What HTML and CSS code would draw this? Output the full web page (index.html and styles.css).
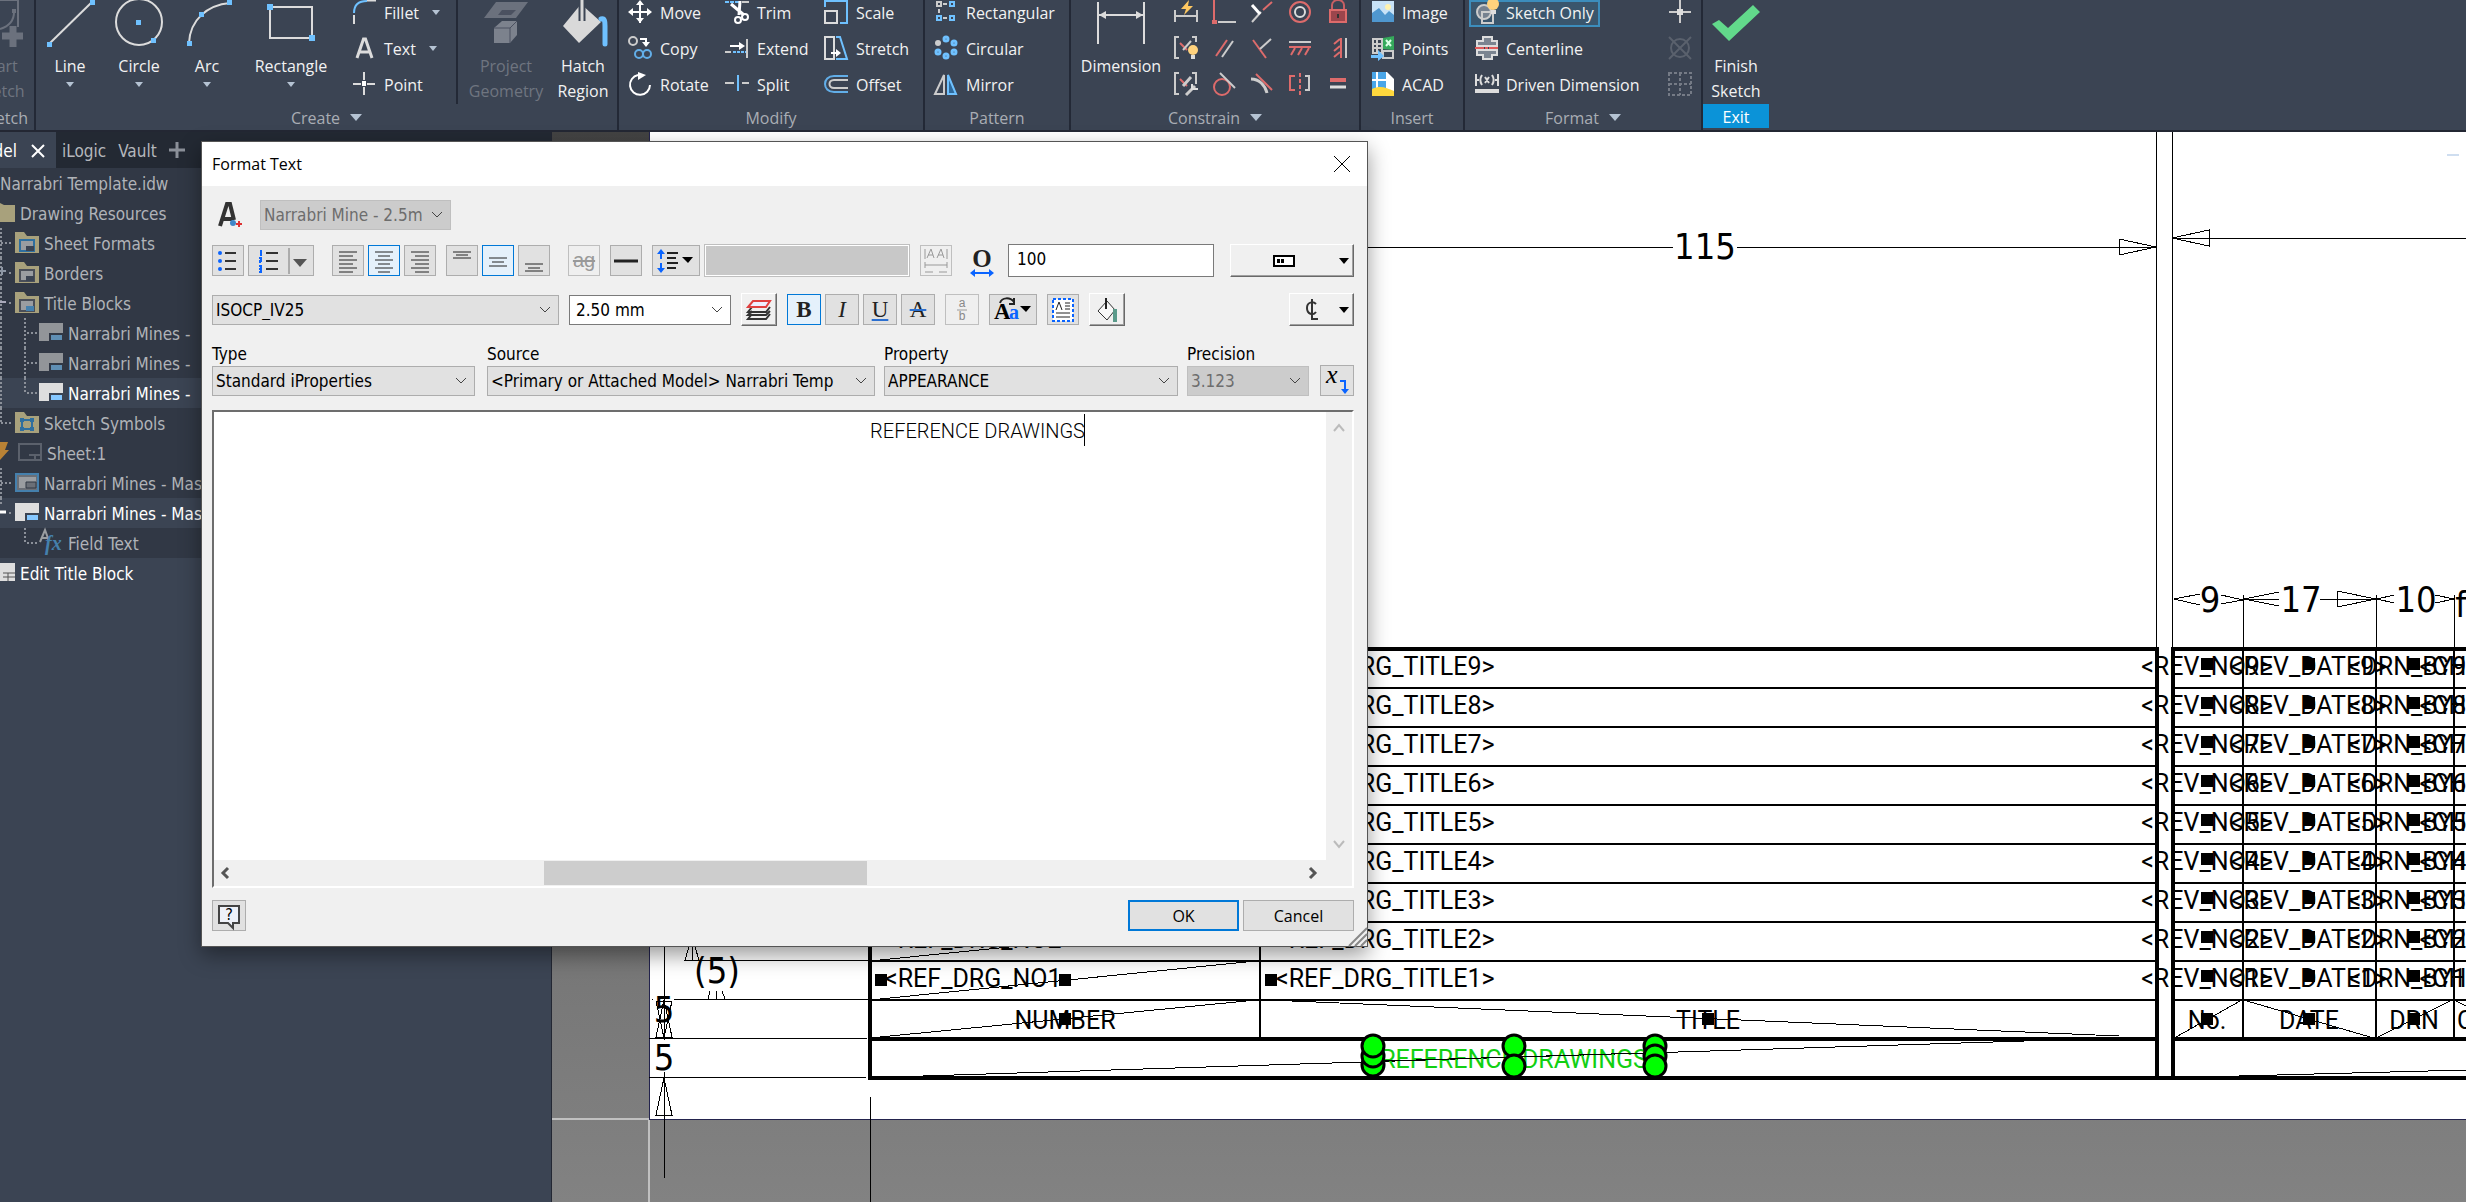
FILE: index.html
```
<!DOCTYPE html>
<html lang="en">
<head>
	<meta charset="UTF-8">
	<title>Narrabri Template.idw</title>
	<link rel="stylesheet" href="styles.css">
</head>
<body>
	<header class="ribbon">
		<section class="panel panel-start">
			<div class="panel-body">
				<button class="big disabled" disabled>
					<svg class="big-icon" width="56" height="54"><g fill="none" stroke="#6b717d" stroke-width="2"><path d="M18 0H46V27M28 29C38 26 42 20 42 12"/></g><path d="M30 36h21M41 26v21" stroke="#6b717d" stroke-width="7"/><path d="M40 9h4v4h-4z" fill="#6b717d"/></svg>
					<span>Start<br>Sketch</span>
				</button>
			</div>
			<h2>Sketch</h2>
		</section>

		<section class="panel panel-create">
			<div class="panel-body">
				<button class="big w-line">
					<svg class="big-icon" width="56" height="54"><path d="M7 44L50 2" stroke="#dcdcdc" stroke-width="2"/><path d="M5 42h5v5h-5zM48 0h5v5h-5z" fill="#6fc1ff"/></svg>
					<span>Line</span><i class="arrow"></i>
				</button>
				<button class="big w-circle">
					<svg class="big-icon" width="56" height="54"><circle cx="28" cy="22" r="23" fill="none" stroke="#dcdcdc" stroke-width="2"/><path d="M25 20h5v5h-5zM40 38h5v5h-5z" fill="#6fc1ff"/></svg>
					<span>Circle</span><i class="arrow"></i>
				</button>
				<button class="big w-arc">
					<svg class="big-icon" width="56" height="54"><path d="M10 43C11 20 28 5 51 3" fill="none" stroke="#dcdcdc" stroke-width="2"/><path d="M8 41h5v5h-5zM20 12h5v5h-5zM48 0h5v5h-5z" fill="#6fc1ff"/></svg>
					<span>Arc</span><i class="arrow"></i>
				</button>
				<button class="big w-rect">
					<svg class="big-icon" width="56" height="54"><path d="M7 7H49V38H7z" fill="none" stroke="#dcdcdc" stroke-width="2"/><path d="M4 4h6v6h-6zM46 35h6v6h-6z" fill="#6fc1ff"/></svg>
					<span>Rectangle</span><i class="arrow"></i>
				</button>
				<div class="tools tools-create">
					<button><svg width="24" height="24"><path d="M2 24V15" stroke="#dcdcdc" stroke-width="2"/><path d="M2 13C2 5 7 1 15 1" fill="none" stroke="#6fc1ff" stroke-width="2"/><path d="M15 0h9" stroke="#dcdcdc" stroke-width="3"/></svg><span>Fillet</span><i class="arrow"></i></button>
					<button><svg width="24" height="24"><path d="M5 22L11.500 3h2L20 22M8 16h9" fill="none" stroke="#dcdcdc" stroke-width="3"/></svg><span>Text</span><i class="arrow"></i></button>
					<button><svg width="24" height="24"><path d="M1 12h8M15 12h8M12 0v8M12 15v8" stroke="#dcdcdc" stroke-width="2"/><path d="M10 9h4v5h-4z" fill="#fff"/></svg><span>Point</span></button>
				</div>
				<button class="big disabled w-project" disabled>
					<svg class="big-icon" width="56" height="54"><path d="M18 2H50L38 18H6z" fill="#6b717d"/><path d="M24 10h14l-5 5H20z" fill="#4b5160"/><path d="M16 28l8-7h15v14l-7 8H16z" fill="#7c828d"/><path d="M16 28h16v15M32 28l7-7" fill="none" stroke="#4b5160"/></svg>
					<span>Project<br>Geometry</span>
				</button>
				<button class="big w-hatch">
					<svg class="big-icon" width="56" height="54"><path d="M26 4L46 22L24 43L8 26z" fill="#d9d9d9"/><path d="M46 19C50 18 50 22 50 26V44" fill="none" stroke="#6fc1ff" stroke-width="5" stroke-linecap="round"/><path d="M27 0v21" stroke="#3b4453" stroke-width="7"/><path d="M27 0v21" stroke="#d9d9d9" stroke-width="3"/></svg>
					<span>Hatch<br>Region</span>
				</button>
			</div>
			<h2>Create<i class="arrow wide"></i></h2>
		</section>

		<section class="panel panel-modify">
			<div class="panel-body">
				<div class="tools tools-modify">
					<button><svg width="24" height="24"><path d="M1 12h22M12 1v22" stroke="#fff" stroke-width="2"/><path d="M12 0l4 5h-8zM12 23l4-5h-8zM0 12l5-4v8zM24 12l-5-4v8z" fill="#fff"/></svg><span>Move</span></button>
					<button><svg width="24" height="24"><path d="M0 2h14" stroke="#6fc1ff" stroke-width="2" stroke-dasharray="4 1"/><path d="M17 2h7" stroke="#ccc" stroke-width="2"/><path d="M15 1L14 15M6 4L19 15" stroke="#fff" stroke-width="3"/><circle cx="13" cy="20" r="3" fill="none" stroke="#fff" stroke-width="2"/><circle cx="20" cy="17" r="3" fill="none" stroke="#fff" stroke-width="2"/></svg><span>Trim</span></button>
					<button><svg width="24" height="24"><path d="M1 7V1H23V23H16" fill="none" stroke="#6fc1ff" stroke-width="2"/><path d="M1 11H13V23H1z" fill="none" stroke="#dcdcdc" stroke-width="2"/></svg><span>Scale</span></button>
					<button><svg width="24" height="24"><circle cx="5" cy="5" r="4" fill="none" stroke="#ccc" stroke-width="2"/><path d="M12 3h6v5" fill="none" stroke="#fff" stroke-width="2"/><path d="M14 6h8l-4 5z" fill="#fff"/><g fill="none" stroke="#62aee8" stroke-width="2"><circle cx="11" cy="18" r="4"/><circle cx="19" cy="18" r="4"/></g></svg><span>Copy</span></button>
					<button><svg width="24" height="24"><path d="M22 3v19" stroke="#ccc" stroke-width="2"/><path d="M5 10h11" stroke="#fff" stroke-width="2"/><path d="M14 6l6 4-6 4z" fill="#fff"/><path d="M0 16h6" stroke="#ccc" stroke-width="2"/><path d="M8 16h13" stroke="#6fc1ff" stroke-width="2" stroke-dasharray="3 1"/></svg><span>Extend</span></button>
					<button><svg width="24" height="24"><path d="M1 1H10V23H1z" fill="none" stroke="#dcdcdc" stroke-width="2"/><path d="M12 1h4l7 22H12" fill="none" stroke="#6fc1ff" stroke-width="2"/><path d="M7 17h7" stroke="#fff" stroke-width="2"/><path d="M12 13l5 4-5 4z" fill="#fff"/></svg><span>Stretch</span></button>
					<button><svg width="24" height="24"><path d="M10 3A10 10 0 1 0 22 13" fill="none" stroke="#fff" stroke-width="2"/><path d="M10 0l8 3-8 5z" fill="#fff"/></svg><span>Rotate</span></button>
					<button><svg width="24" height="24"><path d="M0 11h9M17 11h7" stroke="#ccc" stroke-width="2"/><path d="M13 3v16" stroke="#6fc1ff" stroke-width="2"/></svg><span>Split</span></button>
					<button><svg width="24" height="24"><path d="M24 4H10C-2 4-2 20 10 20H24" fill="none" stroke="#62aee8" stroke-width="2"/><path d="M24 8H10C4 8 4 16 10 16H24" fill="none" stroke="#ccc" stroke-width="2"/></svg><span>Offset</span></button>
				</div>
			</div>
			<h2>Modify</h2>
		</section>

		<section class="panel panel-pattern">
			<div class="panel-body">
				<div class="tools tools-pattern">
					<button><svg width="24" height="24"><g fill="none" stroke-width="2"><path d="M3 2h4v4h-4z" stroke="#ccc"/><path d="M16 2h4v4h-4zM3 16h4v4h-4zM16 16h4v4h-4z" stroke="#6fc1ff"/><path d="M9 4h4M5 9v4M9 18h4" stroke="#ccc"/></g></svg><span>Rectangular</span></button>
					<button><svg width="24" height="24"><circle cx="4" cy="7" r="3" fill="#ccc"/><g fill="none" stroke="#6fc1ff" stroke-width="3"><circle cx="12" cy="3" r="2"/><circle cx="20" cy="7" r="2"/><circle cx="4" cy="16" r="2"/><circle cx="20" cy="16" r="2"/><circle cx="12" cy="20" r="2"/></g></svg><span>Circular</span></button>
					<button><svg width="24" height="24"><path d="M10 3V22H1z" fill="none" stroke="#ccc" stroke-width="2"/><path d="M14 3V22H22z" fill="#2f6a9c" stroke="#6fc1ff" stroke-width="2"/></svg><span>Mirror</span></button>
				</div>
			</div>
			<h2>Pattern</h2>
		</section>

		<section class="panel panel-constrain">
			<div class="panel-body">
				<button class="big w-dim">
					<svg class="big-icon" width="56" height="54"><path d="M5 2v42M51 2v42M5 15h46" stroke="#dcdcdc" stroke-width="2"/><path d="M6 15l7-4v8zM50 15l-7-4v8z" fill="#dcdcdc"/></svg>
					<span>Dimension</span>
				</button>
				<div class="constraints">
					<button aria-label="Auto dimension"><svg width="24" height="24"><path d="M1 10v12M23 10v12M1 16h22" stroke="#ccc" stroke-width="2"/><path d="M15 0L7 9h5l-2 6 9-9h-5z" fill="#ffc861"/></svg></button>
					<button aria-label="Coincident"><svg width="24" height="24"><path d="M2 0v22" stroke="#dd6b6b" stroke-width="2"/><path d="M0 20h5v4h-5z" fill="#dd6b6b"/><path d="M6 22h18" stroke="#ccc" stroke-width="2"/></svg></button>
					<button aria-label="Collinear"><svg width="24" height="24"><path d="M2 22L11 12" stroke="#ccc" stroke-width="2"/><path d="M13 10L22 2" stroke="#dd6b6b" stroke-width="2"/><path d="M2 5l8 9" stroke="#fff" stroke-width="3"/></svg></button>
					<button aria-label="Concentric"><svg width="24" height="24"><circle cx="12" cy="12" r="10" fill="none" stroke="#dd6b6b" stroke-width="2"/><circle cx="12" cy="12" r="5" fill="none" stroke="#dcdcdc" stroke-width="2"/></svg></button>
					<button aria-label="Fix"><svg width="24" height="24"><path d="M6 10V5a6 5 0 0 1 12 0v5" fill="none" stroke="#c65f63" stroke-width="2"/><path d="M4 10h16v12H4z" fill="#9c454c" stroke="#dd6b6b" stroke-width="2"/><path d="M12 14v4" stroke="#333" stroke-width="2"/></svg></button>

					<button aria-label="Show constraints"><svg width="24" height="24"><path d="M5 1H1V22H5M18 1h4v5" fill="none" stroke="#ccc" stroke-width="2"/><path d="M6 7l7 7" stroke="#dd6b6b" stroke-width="2"/><path d="M9 14l8-9" stroke="#ccc" stroke-width="2"/><circle cx="19" cy="14" r="5" fill="#ffd27d"/><path d="M17 19h4v4h-4z" fill="#ddd"/></svg></button>
					<button aria-label="Parallel"><svg width="24" height="24"><path d="M4 20L15 4" stroke="#dd6b6b" stroke-width="2"/><path d="M10 21L21 5" stroke="#ccc" stroke-width="2"/></svg></button>
					<button aria-label="Perpendicular"><svg width="24" height="24"><path d="M3 4l13 18" stroke="#dd6b6b" stroke-width="2"/><path d="M10 13L21 3" stroke="#ccc" stroke-width="2"/></svg></button>
					<button aria-label="Horizontal"><svg width="24" height="24"><path d="M1 6h22" stroke="#ccc" stroke-width="2"/><path d="M1 11h22M7 12l-4 7M14 12l-4 7M21 12l-4 7" stroke="#dd6b6b" stroke-width="2"/></svg></button>
					<button aria-label="Vertical"><svg width="24" height="24"><path d="M20 2v20" stroke="#ccc" stroke-width="2"/><path d="M15 2v20M14 3l-6 5M14 10l-6 5M14 16l-6 5" stroke="#dd6b6b" stroke-width="2"/></svg></button>

					<button aria-label="Constraint settings"><svg width="24" height="24"><path d="M5 1H1V22H5M18 1h4v11" fill="none" stroke="#ccc" stroke-width="2"/><path d="M6 7l7 7" stroke="#dd6b6b" stroke-width="2"/><path d="M9 14l8-9M12 23l9-9" stroke="#ccc" stroke-width="3"/><path d="M18 12v5h6" fill="none" stroke="#ddd" stroke-width="2"/></svg></button>
					<button aria-label="Tangent"><svg width="24" height="24"><circle cx="10" cy="15" r="8" fill="none" stroke="#dd6b6b" stroke-width="2"/><path d="M8 1l15 15" stroke="#ccc" stroke-width="2"/></svg></button>
					<button aria-label="Smooth"><svg width="24" height="24"><path d="M6 2l16 16" stroke="#dd6b6b" stroke-width="2"/><path d="M1 7c8 0 14 6 16 14" fill="none" stroke="#ccc" stroke-width="3"/></svg></button>
					<button aria-label="Symmetric"><svg width="24" height="24"><path d="M7 4H2V18H7" fill="none" stroke="#dd6b6b" stroke-width="2"/><path d="M12 1v22" stroke="#dd6b6b" stroke-width="2" stroke-dasharray="4 2"/><path d="M17 4h4V18h-4" fill="none" stroke="#ccc" stroke-width="2"/></svg></button>
					<button aria-label="Equal"><svg width="24" height="24"><path d="M4 8h16" stroke="#dd6b6b" stroke-width="4"/><path d="M4 15h16" stroke="#ddd" stroke-width="3"/></svg></button>
				</div>
			</div>
			<h2>Constrain<i class="arrow wide"></i></h2>
		</section>

		<section class="panel panel-insert">
			<div class="panel-body">
				<div class="tools tools-insert">
					<button><svg width="24" height="24"><path d="M1 1h22v21H1z" fill="#c8e2f7"/><path d="M1 22V13l7-5 6 7 4-4 5 4v7z" fill="#4f97cf"/><circle cx="17" cy="7" r="3" fill="#fff3b0"/></svg><span>Image</span></button>
					<button><svg width="24" height="24"><path d="M2 3h9v14H2zM2 8h9M2 12h9M6 3v14" fill="none" stroke="#ccc" stroke-width="2"/><path d="M12 2l11-2v14l-11-1z" fill="#35a95b"/><path d="M15 4l5 6M20 4l-5 6" stroke="#d9ffe5" stroke-width="2"/><path d="M12 15h10v7H12z" fill="none" stroke="#ccc" stroke-width="2"/><path d="M0 19h7v-5l6 6-6 5v-3H0z" fill="#6fc1ff"/></svg><span>Points</span></button>
					<button><svg width="24" height="24"><path d="M1 0h15l7 7v17H1z" fill="#fff"/><path d="M1 0h14v18H1z" fill="#4aa6e8"/><path d="M1 8h22M6 0v16" stroke="#fff" stroke-width="2"/><path d="M1 17c9-4 14-1 22 2v5H1z" fill="#ffd83d"/></svg><span>ACAD</span></button>
				</div>
			</div>
			<h2>Insert</h2>
		</section>

		<section class="panel panel-format">
			<div class="panel-body">
				<div class="tools tools-format">
					<button class="active"><svg width="24" height="24"><circle cx="9" cy="12" r="7" fill="#76818f" stroke="#ccc" stroke-width="2"/><path d="M7 12h11v11H7z" fill="none" stroke="#ccc" stroke-width="2"/><circle cx="18" cy="4" r="6" fill="#ffd27d"/><path d="M16 10h5v4h-5z" fill="#ddd"/></svg><span>Sketch Only</span></button>
					<button><svg width="24" height="24"><path d="M8 1h9v4h5v5H2V5h6zM8 23h9v-4h5v-5H2v5h6z" fill="#7b8490" stroke="#ddd" stroke-width="2"/><path d="M0 12h24" stroke="#e05b5b" stroke-width="2" stroke-dasharray="9 1 3 1"/></svg><span>Centerline</span></button>
					<button><svg width="24" height="24"><path d="M1 2v12M23 2v12M1 8h3M20 8h3M7 3c-2 3-2 7 0 10M17 3c2 3 2 7 0 10M10 5l4 6M14 5l-4 6" fill="none" stroke="#ddd" stroke-width="2"/><path d="M0 19h24" stroke="#ddd" stroke-width="4"/></svg><span>Driven Dimension</span></button>
				</div>
				<div class="tools tools-points">
					<button aria-label="Center point"><svg width="24" height="24"><path d="M1 12h22M12 0v23" stroke="#ccc" stroke-width="2"/><path d="M9 9h6v6H9z" fill="#ddd"/></svg></button>
					<button aria-label="Show format" disabled><svg width="24" height="24"><g fill="none" stroke="#5a616d" stroke-width="2"><circle cx="12" cy="12" r="9"/><path d="M1 1l22 22M23 1L1 23"/></g></svg></button>
					<button aria-label="Grid point" disabled><svg width="24" height="24"><path d="M1 1h22v22H1zM12 1v22M1 12h22" fill="none" stroke="#757b86" stroke-width="2" stroke-dasharray="3 2"/></svg></button>
				</div>
			</div>
			<h2>Format<i class="arrow wide"></i></h2>
		</section>

		<section class="panel panel-exit">
			<div class="panel-body">
				<button class="big w-finish">
					<svg class="big-icon" width="56" height="54"><path d="M4 24l7-4 9 8L45 5l7 7L21 41z" fill="#62d98b"/></svg>
					<span>Finish<br>Sketch</span>
				</button>
			</div>
			<h2 class="exit">Exit</h2>
		</section>
	</header>

	<main class="workspace">
		<aside class="browser">
			<nav class="tabs">
				<button class="tab current"><span>Model</span><svg width="14" height="14"><path d="M1 1l12 12M13 1L1 13" stroke="#fff" stroke-width="2"/></svg></button>
				<button class="tab">iLogic</button>
				<button class="tab">Vault</button>
				<button class="tab" aria-label="Add tab"><svg width="16" height="16"><path d="M0 8h16M8 0v16" stroke="#8b9099" stroke-width="3"/></svg></button>
			</nav>
			<ul class="tree">
				<li class="root">Narrabri Template.idw</li>
				<li><svg width="15" height="24"><path d="M0 2l4 2h11v17H0z" fill="#a8a17c"/></svg><span>Drawing Resources</span></li>
				<li><svg width="39" height="30"><path class="dots" d="M1 0v30M1 15h12"/><path d="M15 4h9l3 4h12v17H15z" fill="#a8a17c"/><path d="M20 12h14v11H20z" fill="#9a9da1" stroke="#2f6f9f" stroke-width="2"/><path d="M26 18h8v5h-8z" fill="#3b4453"/></svg><span>Sheet Formats</span></li>
				<li><svg width="39" height="30"><path class="dots" d="M1 0v30M9 15h4"/><path d="M0 13h6M2 9v8" stroke="#8e97a5" stroke-width="2"/><path d="M15 4h9l3 4h12v17H15z" fill="#a8a17c"/><path d="M20 12h14v11H20z" fill="#9a9da1" stroke="#4a4f59" stroke-width="2"/><path d="M26 18h8v5h-8z" fill="#3b4453"/></svg><span>Borders</span></li>
				<li><svg width="39" height="30"><path class="dots" d="M1 0v30M9 15h4"/><path d="M0 14h6" stroke="#aab" stroke-width="2"/><path d="M15 4h9l3 4h12v17H15z" fill="#a8a17c"/><path d="M20 12h14v11H20z" fill="#9a9da1" stroke="#4a4f59" stroke-width="2"/><path d="M26 18h8v5h-8z" fill="#4580ad"/></svg><span>Title Blocks</span></li>
				<li><svg width="63" height="30"><path class="dots" d="M1 0v30M25 0v30M27 15h10"/><path d="M39 5h24v18H39z" fill="#929599"/><path d="M50 16h13v7H50z" fill="#5f8fb4" stroke="#313845" stroke-width="2"/></svg><span>Narrabri Mines -</span></li>
				<li><svg width="63" height="30"><path class="dots" d="M1 0v30M25 0v30M27 15h10"/><path d="M39 5h24v18H39z" fill="#929599"/><path d="M50 16h13v7H50z" fill="#5f8fb4" stroke="#313845" stroke-width="2"/></svg><span>Narrabri Mines -</span></li>
				<li class="selected"><svg width="63" height="30"><path class="dots" d="M1 0v30M25 0v15M27 15h10"/><path d="M39 5h24v18H39z" fill="#dedede"/><path d="M50 16h13v7H50z" fill="#86c8ff" stroke="#3b4453" stroke-width="2"/></svg><span>Narrabri Mines -</span></li>
				<li><svg width="39" height="30"><path class="dots" d="M1 0v15M1 15h12"/><path d="M15 4h9l3 4h12v17H15z" fill="#a8a17c"/><path d="M22 12h10v9H22z" fill="none" stroke="#2f6f9f" stroke-width="2"/><path d="M20 10h4v4h-4zM30 10h4v4h-4zM20 19h4v4h-4zM30 19h4v4h-4z" fill="#2f6f9f"/></svg><span>Sketch Symbols</span></li>
				<li><svg width="42" height="30"><path d="M0 4h8l-3 8h4L0 22z" fill="#b98235"/><path d="M19 6h22v16H19zM29 17h12M35 17v5" fill="none" stroke="#5b616c" stroke-width="2"/></svg><span>Sheet:1</span></li>
				<li><svg width="39" height="30"><path class="dots" d="M1 0v30M1 15h12"/><path d="M16 6h22v17H16z" fill="#6a6f77" stroke="#4580ad" stroke-width="2"/><path d="M19 9h17v11H19z" fill="#9a9da1"/><path d="M26 14h10v6H26z" fill="#6a6f77" stroke="#313845"/></svg><span>Narrabri Mines - Master</span></li>
				<li class="selected"><svg width="39" height="30"><path class="dots" d="M1 0v8M9 15h4"/><path d="M0 14h6" stroke="#fff" stroke-width="3"/><path d="M15 5h24v18H15z" fill="#dedede"/><path d="M26 16h13v7H26z" fill="#86c8ff" stroke="#3b4453" stroke-width="2"/></svg><span>Narrabri Mines - Master</span></li>
				<li><svg width="63" height="30"><path class="dots" d="M25 0v15M27 15h10"/><path d="M40 14l5-12 4 11M42 10h6" fill="none" stroke="#9a9da1" stroke-width="2"/><text x="45" y="22" class="fx">fx</text></svg><span>Field Text</span></li>
				<li class="selected"><svg width="15" height="24"><path d="M0 2h15v18H0z" fill="#dedede"/><path d="M3 12h12M3 16h12M8 12v8" stroke="#555" stroke-width="1"/></svg><span>Edit Title Block</span></li>
			</ul>
		</aside>

		<section class="canvas">
			<svg class="drawing" viewBox="552 132 1914 1070" preserveAspectRatio="xMinYMin slice">
				<defs>
					<g id="row-marks"><path d="M2201-17h12v12h-12zM2303-17h12v12h-12zM2408-17h12v12h-12z"/></g>
				</defs>
				<rect x="649" y="132" width="1817" height="987" fill="#fff"/>
				<path d="M552 1119H649M649 1120V1202" stroke="#c0c0c0" stroke-width="2"/>
				<path d="M649 132V1119H2466" fill="none" stroke="#23234d" shape-rendering="crispEdges"/>
				<path d="M2447 155h12" stroke="#cfdef0" stroke-width="2"/>

				<!-- dimension lines -->
				<g class="thin">
					<path d="M2156 132V649M2172 132V649M2243 595V649M2376 595V649M2454 595V649"/>
					<path d="M1367 247H1673M1737 247H2156M2119 239V255L2156 247z"/>
					<path d="M2466 238H2172M2172 238L2209 230V246z"/>
					<path d="M2200 594L2174 599L2200 605M2221 595L2243 600L2221 604M2279 592L2244 599L2279 606M2244 599H2279M2320 599H2376M2376 599L2337 591V607zM2394 595L2377 599L2394 603M2435 595L2454 599L2435 603"/>
					<path d="M664 947V1040M664 1072V1178M686 960H869M674 999H869M652 999h1M649 1038H867M649 1077H866M870 1097V1202"/>
					<path d="M689 947L685 960H699L695 947M692 947V960M710 991L708 999H725L722 991M716 991V999M656 1001H672L664 1038L656 1001M664 1000L656 1037H672zM664 1078L656 1115H672z"/>
				</g>
				<g class="dim">
					<text x="1705" y="259">115</text>
					<text x="2210" y="612">9</text>
					<text x="2301" y="612">17</text>
					<text x="2416" y="612">10</text>
					<text x="2461" y="617">f</text>
					<text x="717" y="983">(5)</text>
					<text x="664" y="1022">5</text>
					<text x="664" y="1070">5</text>
				</g>

				<!-- title block frame -->
				<g class="frame">
					<path d="M870 649V1078M868 649H2157M2173 649H2466M2157 647V1080M2173 647V1080M870 1039H2157M2173 1039H2466M868 1078H2466" stroke-width="4"/>
					<path d="M870 688H2157M870 727H2157M870 766H2157M870 805H2157M870 844H2157M870 883H2157M870 922H2157M870 961H2157M870 1000H2157" stroke-width="2"/>
					<path d="M2173 688H2466M2173 727H2466M2173 766H2466M2173 805H2466M2173 844H2466M2173 883H2466M2173 922H2466M2173 961H2466M2173 1000H2466" stroke-width="2"/>
					<path d="M1260 649V1039M2243 649V1039M2376 649V1039M2454 649V1039" stroke-width="2"/>
				</g>
				<g class="thin">
					<path d="M880 960L1246 923M880 999L1246 962M880 1037L1246 1001M1292 1001L2119 1036M923 1076L2119 1038M2239 1076L2466 1070"/>
					<path d="M2176 1037L2240 1001M2247 1001L2370 1037M2378 1037L2450 1001M2456 1001L2466 1006"/>
				</g>

				<g class="note">
					<text x="1276" y="675">&lt;REF_DRG_TITLE9&gt;</text>
					<text x="1276" y="714">&lt;REF_DRG_TITLE8&gt;</text>
					<text x="1276" y="753">&lt;REF_DRG_TITLE7&gt;</text>
					<text x="1276" y="792">&lt;REF_DRG_TITLE6&gt;</text>
					<text x="1276" y="831">&lt;REF_DRG_TITLE5&gt;</text>
					<text x="1276" y="870">&lt;REF_DRG_TITLE4&gt;</text>
					<text x="1276" y="909">&lt;REF_DRG_TITLE3&gt;</text>
					<text x="1276" y="948">&lt;REF_DRG_TITLE2&gt;</text>
					<text x="1276" y="987">&lt;REF_DRG_TITLE1&gt;</text>
					<text x="885" y="948">&lt;REF_DRG_NO2</text>
					<text x="885" y="987">&lt;REF_DRG_NO1</text>
				</g>
				<path d="M875 974h12v12h-12zM1059 974h12v12h-12zM1265 974h12v12h-12zM1059 1013h12v12h-12zM1702 1013h12v12h-12z"/>

				<g class="note mid" transform="translate(0 675)"><text x="2207">&lt;REV_NO9&gt;</text><text x="2309">&lt;REV_DATE9&gt;</text><text x="2414">&lt;DRN_BY9&gt;</text><text x="2485">&lt;CHK_BY9&gt;</text><use href="#row-marks"/></g>
				<g class="note mid" transform="translate(0 714)"><text x="2207">&lt;REV_NO8&gt;</text><text x="2309">&lt;REV_DATE8&gt;</text><text x="2414">&lt;DRN_BY8&gt;</text><text x="2485">&lt;CHK_BY8&gt;</text><use href="#row-marks"/></g>
				<g class="note mid" transform="translate(0 753)"><text x="2207">&lt;REV_NO7&gt;</text><text x="2309">&lt;REV_DATE7&gt;</text><text x="2414">&lt;DRN_BY7&gt;</text><text x="2485">&lt;CHK_BY7&gt;</text><use href="#row-marks"/></g>
				<g class="note mid" transform="translate(0 792)"><text x="2207">&lt;REV_NO6&gt;</text><text x="2309">&lt;REV_DATE6&gt;</text><text x="2414">&lt;DRN_BY6&gt;</text><text x="2485">&lt;CHK_BY6&gt;</text><use href="#row-marks"/></g>
				<g class="note mid" transform="translate(0 831)"><text x="2207">&lt;REV_NO5&gt;</text><text x="2309">&lt;REV_DATE5&gt;</text><text x="2414">&lt;DRN_BY5&gt;</text><text x="2485">&lt;CHK_BY5&gt;</text><use href="#row-marks"/></g>
				<g class="note mid" transform="translate(0 870)"><text x="2207">&lt;REV_NO4&gt;</text><text x="2309">&lt;REV_DATE4&gt;</text><text x="2414">&lt;DRN_BY4&gt;</text><text x="2485">&lt;CHK_BY4&gt;</text><use href="#row-marks"/></g>
				<g class="note mid" transform="translate(0 909)"><text x="2207">&lt;REV_NO3&gt;</text><text x="2309">&lt;REV_DATE3&gt;</text><text x="2414">&lt;DRN_BY3&gt;</text><text x="2485">&lt;CHK_BY3&gt;</text><use href="#row-marks"/></g>
				<g class="note mid" transform="translate(0 948)"><text x="2207">&lt;REV_NO2&gt;</text><text x="2309">&lt;REV_DATE2&gt;</text><text x="2414">&lt;DRN_BY2&gt;</text><text x="2485">&lt;CHK_BY2&gt;</text><use href="#row-marks"/></g>
				<g class="note mid" transform="translate(0 987)"><text x="2207">&lt;REV_NO1&gt;</text><text x="2309">&lt;REV_DATE1&gt;</text><text x="2414">&lt;DRN_BY1&gt;</text><text x="2485">&lt;CHK_BY1&gt;</text><use href="#row-marks"/></g>
				<g class="note mid" transform="translate(0 1029)"><text x="1065">NUMBER</text><text x="1708">TITLE</text><text x="2207">No.</text><text x="2309">DATE</text><text x="2414">DRN</text><text x="2482">CHK</text></g>
				<use href="#row-marks" y="1030"/>

				<!-- selected text and its grips -->
				<g class="note mid picked"><text x="1514" y="1068">REFERENCE DRAWINGS</text></g>
				<path class="thin" d="M1384 1061L1644 1053"/>
				<g class="grips">
					<circle cx="1373" cy="1065" r="11"/><circle cx="1373" cy="1056" r="11"/><circle cx="1373" cy="1046" r="11"/>
					<circle cx="1514" cy="1046" r="11"/><circle cx="1514" cy="1066" r="11"/>
					<circle cx="1655" cy="1046" r="11"/><circle cx="1655" cy="1056" r="11"/><circle cx="1655" cy="1066" r="11"/>
				</g>
			</svg>
		</section>
	</main>

	<div class="dialog" role="dialog" aria-labelledby="dialog-title">
		<div class="title-bar">
			<h1 id="dialog-title">Format Text</h1>
			<button class="close" aria-label="Close"><svg width="16" height="16"><path d="M0 0l16 16M16 0L0 16" stroke="#000"/></svg></button>
		</div>
		<div class="dialog-body">
			<div class="row style-row">
				<svg width="28" height="28"><path d="M4 25L11 3h3l4 16M7 18h9" fill="none" stroke="#333" stroke-width="4"/><circle cx="17" cy="22" r="3" fill="#3f87c8"/><path d="M20 23h6M23 20v6" stroke="#d33" stroke-width="2"/></svg>
				<select class="s-style" aria-label="Style" disabled><option>Narrabri Mine - 2.5mm</option></select>
			</div>

			<div class="row">
				<div class="group">
					<button class="tool" aria-label="Bullets"><svg width="24" height="24"><g fill="#0a64ff"><circle cx="4" cy="4" r="2"/><circle cx="4" cy="12" r="2"/><circle cx="4" cy="20" r="2"/></g><path d="M9 4h11M9 12h11M9 20h11" stroke="#333" stroke-width="2"/></svg></button>
					<button class="tool numbering" aria-label="Numbering"><svg width="50" height="28"><path d="M5 3v6M3 11h2v3H4v2M3 19h2v6H3M3 22h2" fill="none" stroke="#0a64ff" stroke-width="2"/><path d="M10 6h12M10 14h12M10 22h12" stroke="#333" stroke-width="2"/><path d="M33 1v26" stroke="#777"/><path d="M37 12h14l-7 8z" fill="#555"/></svg></button>
				</div>
				<div class="group spaced">
					<button class="tool" aria-label="Left"><svg width="20" height="24"><path d="M1 3h18M1 7h14M1 11h18M1 15h14M1 19h18M1 23h14" stroke="#222"/></svg></button>
					<button class="tool on" aria-label="Center"><svg width="20" height="24"><path d="M1 3h18M4 7h12M1 11h18M4 15h12M1 19h18M4 23h12" stroke="#222"/></svg></button>
					<button class="tool" aria-label="Right"><svg width="20" height="24"><path d="M1 3h18M5 7h14M1 11h18M5 15h14M1 19h18M5 23h14" stroke="#222"/></svg></button>
				</div>
				<div class="group">
					<button class="tool" aria-label="Top"><svg width="20" height="24"><path d="M1 3h18M4 6h12M1 9h18" stroke="#222"/></svg></button>
					<button class="tool on" aria-label="Middle"><svg width="20" height="24"><path d="M1 9h18M4 13h12M1 17h18" stroke="#222"/></svg></button>
					<button class="tool" aria-label="Bottom"><svg width="20" height="24"><path d="M1 15h18M4 19h12M1 22h18" stroke="#222"/></svg></button>
				</div>
				<button class="tool faded g-base spaced" aria-label="Baseline" disabled><span class="glyph">ag</span></button>
				<button class="tool" aria-label="Single line"><svg width="24" height="24"><path d="M0 12h24" stroke="#222" stroke-width="3"/></svg></button>
				<div class="group g-spacing">
					<button class="tool wide" aria-label="Line spacing"><svg width="38" height="24"><path d="M4 2v8M4 14v8" stroke="#0a64ff" stroke-width="2"/><path d="M0 5l4-5 4 5zM0 19l4 5 4-5z" fill="#0a64ff"/><path d="M10 4h11M10 9h9M10 14h11M10 19h9" stroke="#222" stroke-width="2"/><path d="M25 8h11l-5 6z"/></svg></button>
					<input class="spacing" aria-label="Spacing value" disabled>
				</div>
				<button class="tool faded" aria-label="Fit text" disabled><svg width="26" height="28"><path d="M2 2v10M24 2v10M4 11l4-9 3 9M14 11l4-9 3 9M5 8h5M15 8h5M2 18h22M2 15v6M24 15v6M2 25h8M16 25h8" fill="none" stroke="#999"/></svg></button>
				<div class="group g-stretch spaced">
					<svg width="24" height="32"><text x="12" y="22" class="stretch-o">O</text><path d="M2 28h20" stroke="#0a64ff" stroke-width="2"/><path d="M0 28l5-4v8zM24 28l-5-4v8z" fill="#0a64ff"/></svg>
					<input class="stretch" aria-label="Stretch" value="100">
				</div>
				<button class="raised ports push" aria-label="Text box"><svg width="22" height="12"><path d="M1 1h20v10H1z" fill="#fff" stroke="#000" stroke-width="2"/><path d="M4 4h3v4H4zM8 4h3v4H8z"/></svg><i class="drop"></i></button>
			</div>

			<div class="row">
				<select class="s-font" aria-label="Font"><option>ISOCP_IV25</option></select>
				<select class="s-size" aria-label="Size"><option>2.50 mm</option></select>
				<button class="raised small" aria-label="Layers"><svg width="26" height="22"><path d="M6 8l-4 5h18l4-5M6 12l-4 4h18l4-4M6 15l-4 5h18l4-5" fill="none" stroke="#333" stroke-width="2"/><path d="M7 2h17l-4 6H2z" fill="#eef" stroke="#e04040" stroke-width="2"/></svg></button>
				<div class="group g-bold">
					<button class="tool on glyph" aria-label="Bold"><b>B</b></button>
					<button class="tool glyph" aria-label="Italic"><em>I</em></button>
					<button class="tool glyph" aria-label="Underline"><span class="under">U</span></button>
					<button class="tool glyph" aria-label="Strikethrough"><span class="through">A</span></button>
				</div>
				<button class="tool faded fraction" aria-label="Stack" disabled><svg width="20" height="26"><text x="10" y="10">a</text><path d="M5 13h10" stroke="#999"/><text x="10" y="23">b</text></svg></button>
				<button class="tool wide" aria-label="Case"><svg width="38" height="28"><text x="0" y="23" class="case-a">A</text><text x="15" y="23" class="case-b">a</text><path d="M6 7C8 1 16 1 20 6M20 2v6h-5" fill="none" stroke="#222" stroke-width="2"/><path d="M26 10h11l-5 6z"/></svg></button>
				<button class="tool" aria-label="Text frame"><svg width="22" height="24"><path d="M1 1h20v22H1z" fill="#fff" stroke="#0a64ff" stroke-width="2" stroke-dasharray="3 2"/><path d="M13 5h5M13 8h5M13 11h5M4 15h14M4 19h14M4 12l3-8 3 8" fill="none" stroke="#222"/></svg></button>
				<button class="raised small" aria-label="Fill"><svg width="26" height="26"><path d="M13 4l8 9-8 10-9-9z" fill="#f7f7f7" stroke="#333"/><path d="M12 1v11" stroke="#222" stroke-width="2"/><path d="M21 12v13" stroke="#5a9a8a" stroke-width="4"/></svg></button>
				<button class="raised symbol push" aria-label="Insert symbol"><svg width="14" height="24"><path d="M11 6C8 3 2 4 2 10s6 8 9 4M7 1v20h6" fill="none" stroke="#333" stroke-width="2"/></svg><i class="drop"></i></button>
			</div>

			<div class="row fields">
				<label class="f-type">Type<select><option>Standard iProperties</option></select></label>
				<label class="f-source">Source<select><option>&lt;Primary or Attached Model&gt; Narrabri Temp</option></select></label>
				<label class="f-prop">Property<select><option>APPEARANCE</option></select></label>
				<label class="f-prec">Precision<select disabled><option>3.123</option></select></label>
				<button class="tool add" aria-label="Add parameter"><svg width="28" height="28"><text x="3" y="16" class="param-x">x</text><path d="M17 14h5v10" fill="none" stroke="#0a64ff" stroke-width="2"/><path d="M18 22h8l-4 5z" fill="#0a64ff"/></svg></button>
			</div>

			<div class="editor">
				<textarea aria-label="Text" spellcheck="false">REFERENCE DRAWINGS</textarea>
				<span class="caret"></span>
				<div class="vbar"><svg width="14" height="10"><path d="M2 9l5-6 5 6" fill="none" stroke="#bbb" stroke-width="2"/></svg><svg width="14" height="10"><path d="M2 1l5 6 5-6" fill="none" stroke="#bbb" stroke-width="2"/></svg></div>
				<div class="hbar"><svg width="10" height="12"><path d="M8 1L3 6l5 5" fill="none" stroke="#555" stroke-width="3"/></svg><div class="thumb"></div><svg width="10" height="12"><path d="M2 1l5 5-5 5" fill="none" stroke="#555" stroke-width="3"/></svg></div>
			</div>

			<div class="footer">
				<button class="tool" aria-label="Help"><svg width="24" height="26"><path d="M2 3h20v17h-6v5l-5-5H2z" fill="#eef1f8" stroke="#444" stroke-width="2"/><text x="12" y="17" class="help">?</text></svg></button>
				<button class="action ok">OK</button>
				<button class="action">Cancel</button>
			</div>
		</div>
		<svg class="gripper" width="18" height="18"><path d="M0 18L18 0M6 18L18 6M12 18l6-6" stroke="#888" stroke-width="2"/></svg>
	</div>
</body>
</html>
```
FILE: styles.css
```
*{
	margin: 0;
	padding: 0;
	box-sizing: border-box;
}
html,body{
	height: 100%;
}
body{
	display: flex;
	flex-direction: column;
	position: relative;
	overflow: hidden;
	background: #3b4453;
	font-family: "DejaVu Sans Condensed", "DejaVu Sans", Tahoma, sans-serif;
	font-size: 17px;
}
button,select,input,textarea{
	font: inherit;
	color: inherit;
	border: 0;
	border-radius: 0;
	background: none;
}
ul{
	list-style: none;
}
svg{
	flex: none;
	overflow: visible;
}

/* ribbon */
.ribbon{
	display: flex;
	flex: none;
	height: 132px;
	background: #3b4453;
	border-bottom: 2px solid #232733;
	color: #f2f2f2;
	font-family: "Open Sans", "Noto Sans", sans-serif;
	font-size: 16px;
	overflow: hidden;
}
.panel{
	display: flex;
	flex-direction: column;
	flex: none;
	border-right: 2px solid #232936;
}
.panel-body{
	display: flex;
	flex: 1;
}
.panel h2{
	height: 26px;
	line-height: 28px;
	text-align: center;
	font-size: 16px;
	font-weight: normal;
	color: #a9adb4;
}
.panel-start{
	width: 36px;
	align-items: flex-end;
	padding-right: 6px;
	overflow: hidden;
}
.panel-create{
	width: 583px;
}
.panel-modify{
	width: 306px;
}
.panel-pattern{
	width: 146px;
}
.panel-constrain{
	width: 290px;
}
.panel-insert{
	width: 104px;
}
.panel-format{
	width: 238px;
}
.panel-exit{
	border: 0;
}
.panel .exit{
	height: 24px;
	line-height: 26px;
	margin-bottom: 2px;
	background: #0b93d8;
	color: #fff;
}
.big{
	display: flex;
	flex-direction: column;
	align-items: center;
	line-height: 25px;
}
.disabled{
	color: #6f7580;
}
.w-line{
	width: 68px;
}
.w-circle{
	width: 70px;
}
.w-arc{
	width: 66px;
}
.w-rect{
	width: 102px;
}
.w-project{
	width: 98px;
	border-left: 2px solid #232936;
}
.w-hatch{
	width: 58px;
}
.w-dim{
	width: 100px;
}
.w-finish{
	width: 66px;
}
.arrow{
	width: 0;
	height: 0;
	margin-top: 3px;
	border: 4px solid transparent;
	border-top: 5px solid #b5c3d3;
	border-bottom: 0;
}
.arrow.wide{
	display: inline-block;
	margin: 0 0 3px 10px;
	border-width: 7px 6px 0;
}
.tools{
	display: grid;
	grid-auto-rows: 24px;
	row-gap: 12px;
	align-content: start;
}
.tools button{
	display: flex;
	align-items: center;
	gap: 8px;
	line-height: 24px;
	white-space: nowrap;
}
.tools span{
	padding-top: 1px;
}
.tools .arrow{
	margin: 0 0 0 5px;
}
.tools-create{
	width: 114px;
	padding-left: 10px;
}
.tools-modify{
	grid-template-columns: 97px 99px 100px;
	padding-left: 9px;
}
.tools-pattern{
	padding-left: 9px;
}
.tools-insert{
	padding-left: 10px;
}
.tools-insert button,.tools-format button{
	gap: 7px;
}
.tools-format{
	width: 203px;
	padding-left: 4px;
}
.tools-format button{
	justify-self: start;
	padding: 0 6px;
}
.tools-format .active{
	height: 27px;
	padding-bottom: 3px;
	background: #3a566d;
	box-shadow: inset 0 0 0 2px #3c8dbc;
}
.constraints{
	display: grid;
	grid-template-columns: repeat(5, 24px);
	grid-auto-rows: 24px;
	align-content: start;
	gap: 12px 14px;
	padding-left: 3px;
}

/* model browser */
.workspace{
	display: flex;
	flex: 1;
	min-height: 0;
}
.browser{
	width: 552px;
	flex: none;
	border-right: 1px solid #232733;
}
.tabs{
	display: flex;
	align-items: center;
	height: 36px;
	background: #232933;
	color: #b4b7bc;
}
.tab{
	height: 36px;
	margin-right: 12px;
	padding-top: 2px;
}
.tab:last-child{
	padding-top: 4px;
}
.tab.current{
	display: flex;
	align-items: center;
	justify-content: flex-end;
	gap: 14px;
	width: 56px;
	margin-right: 6px;
	padding-right: 11px;
	overflow: hidden;
	background: #3b4453;
	color: #fff;
}
.tree{
	background: #313845;
	color: #b0b3b8;
}
.tree li{
	display: flex;
	align-items: center;
	gap: 5px;
	height: 30px;
	white-space: nowrap;
}
.tree span,.tree .root{
	padding-top: 2px;
}
.tree .selected{
	background: #3b4453;
	color: #fff;
}
.dots{
	fill: none;
	stroke: #8b9099;
	stroke-width: 2;
	stroke-dasharray: 2 2;
}
.fx{
	font: italic bold 20px "Liberation Serif", serif;
	fill: #4580ad;
}

/* drawing */
.canvas{
	flex: 1;
	min-width: 0;
	background: linear-gradient(#434343, #787878 80%, #828282);
}
.drawing{
	display: block;
	width: 100%;
	height: 100%;
	overflow: hidden;
}
.thin{
	fill: none;
	stroke: #000;
	stroke-width: 1;
	shape-rendering: crispEdges;
}
.frame{
	fill: none;
	stroke: #000;
	shape-rendering: crispEdges;
}
.dim{
	font-size: 36px;
	text-anchor: middle;
}
.note{
	font-family: Roboto, "Liberation Sans Narrow", sans-serif;
	font-size: 25px;
}
.mid{
	text-anchor: middle;
}
.picked{
	fill: #12d012;
}
.grips{
	fill: #00ff00;
	stroke: #000;
	stroke-width: 3;
}

/* format text dialog */
.dialog{
	position: absolute;
	left: 201px;
	top: 141px;
	width: 1167px;
	max-width: 100%;
	background: #f0f0f0;
	border: 1px solid #555;
	box-shadow: 0 8px 20px rgba(0,0,0,.4);
	color: #000;
}
.title-bar{
	display: flex;
	align-items: center;
	justify-content: space-between;
	height: 44px;
	padding: 0 17px 0 10px;
	background: #fff;
}
.title-bar h1{
	font-family: "Open Sans", "Noto Sans", sans-serif;
	font-size: 16px;
	font-weight: normal;
}
.close{
	height: 16px;
}
.dialog-body{
	padding: 12px 13px 15px 10px;
}
.row{
	display: flex;
	align-items: center;
	gap: 10px;
	height: 33px;
	margin-bottom: 16px;
}
.style-row{
	gap: 16px;
	margin-bottom: 13px;
}
.style-row svg{
	margin-left: 4px;
}
.group{
	display: flex;
	align-items: center;
	gap: 4px;
}
.spaced{
	margin-left: 8px;
}
select{
	appearance: none;
	height: 30px;
	padding: 0 28px 0 3px;
	border: 1px solid #adadad;
	background: #e1e1e1 url("data:image/svg+xml,%3Csvg xmlns='http://www.w3.org/2000/svg' width='12' height='8'%3E%3Cpath d='M1 1l5 5 5-5' fill='none' stroke='%23444'/%3E%3C/svg%3E") no-repeat right 7px center;
}
select:disabled{
	background-color: #ccc;
	border-color: #bfbfbf;
	color: #6d6d6d;
	opacity: 1;
}
.s-style{
	width: 191px;
}
.s-font{
	width: 347px;
}
.s-size{
	width: 162px;
	padding-left: 6px;
	background-color: #fff;
	border-color: #7a7a7a;
}
.tool{
	display: flex;
	align-items: center;
	justify-content: center;
	flex: none;
	width: 32px;
	height: 31px;
	border: 1px solid #adadad;
	background: #e1e1e1;
}
.tool.on{
	background: #e5f1fb;
	border-color: #0078d7;
}
.tool.faded{
	background: #efefef;
	border-color: #bfbfbf;
	color: #999;
}
.tool.numbering{
	width: 66px;
}
.tool.wide{
	width: 48px;
}
.glyph{
	font-family: "Liberation Serif", serif;
	font-size: 23px;
	color: #222;
}
.g-bold .tool,.fraction,.add{
	width: 34px;
}
.g-base .glyph{
	font-family: "Liberation Sans", sans-serif;
	font-size: 20px;
	color: #999;
	text-decoration: line-through;
}
.under{
	text-decoration: underline #2b6fd0;
}
.through{
	text-decoration: line-through #2b6fd0 2px;
}
.fraction text{
	font: 12px "Liberation Sans", sans-serif;
	fill: #888;
	text-anchor: middle;
}
.case-a{
	font: bold 23px "Liberation Serif", serif;
}
.case-b{
	font: bold 20px "Liberation Serif", serif;
	fill: #0a64ff;
}
.param-x{
	font: italic 26px "Liberation Serif", serif;
}
.help{
	font-size: 16px;
	text-anchor: middle;
}
.stretch-o{
	font: bold 25px "Liberation Serif", serif;
	text-anchor: middle;
	fill: #222;
}
.g-spacing input{
	width: 206px;
	height: 33px;
	border: 1px solid #bfbfbf;
	background: #c8c8c8;
	box-shadow: inset 0 0 0 1px #fff;
}
.g-stretch{
	gap: 14px;
}
.stretch{
	width: 206px;
	height: 33px;
	padding: 0 8px 3px;
	border: 1px solid #7a7a7a;
	background: #fff;
}
.raised{
	display: flex;
	align-items: center;
	justify-content: flex-end;
	gap: 44px;
	flex: none;
	width: 124px;
	height: 33px;
	padding-right: 4px;
	background: #f0f0f0;
	border: 1px solid #fff;
	border-color: #fff #696969 #696969 #fff;
	box-shadow: inset -1px -1px 0 #a0a0a0;
}
.raised.small{
	width: 36px;
	padding: 0;
	justify-content: center;
}
.raised.symbol{
	width: 65px;
	gap: 20px;
}
.push{
	margin-left: auto;
}
.drop{
	border: 5px solid transparent;
	border-top: 6px solid #000;
	border-bottom: 0;
}
.fields{
	align-items: flex-end;
	gap: 9px;
	height: 54px;
	margin-bottom: 14px;
}
.fields label{
	display: flex;
	flex-direction: column;
	line-height: 23px;
}
.f-type{
	width: 263px;
	margin-right: 3px;
}
.f-source{
	width: 388px;
}
.f-prop{
	width: 294px;
}
.f-prec{
	width: 122px;
}
.add{
	margin-left: auto;
}
.editor{
	display: grid;
	grid-template: 448px 26px / 1fr 26px;
	position: relative;
	border: 2px solid #6d6d6d;
	border-color: #6d6d6d #fff #fff #6d6d6d;
	background: #fff;
}
.editor textarea{
	padding: 6px 0 0 59%;
	resize: none;
	outline: 0;
	overflow: hidden;
	font-family: Roboto, sans-serif;
	font-size: 20px;
	font-weight: 300;
	line-height: 26px;
}
/* text cursor after the last letter */
.caret{
	position: absolute;
	left: 870px;
	top: 2px;
	width: 1px;
	height: 32px;
	background: #000;
}
.vbar{
	display: flex;
	flex-direction: column;
	justify-content: space-between;
	align-items: center;
	padding: 10px 0;
	background: #f0f0f0;
}
.hbar{
	display: grid;
	grid-template-columns: 12px 1fr 12px;
	grid-column: 1 / 3;
	align-items: center;
	padding: 0 32px 0 6px;
	background: #f0f0f0;
}
.thumb{
	width: 30%;
	height: 24px;
	margin-left: 29%;
	background: #cdcdcd;
}
.footer{
	display: flex;
	gap: 4px;
	padding-top: 12px;
}
.footer .tool{
	width: 34px;
}
.action{
	width: 111px;
	height: 31px;
	border: 1px solid #adadad;
	background: #e1e1e1;
	font-family: "Open Sans", "Noto Sans", sans-serif;
	font-size: 16px;
}
.ok{
	margin-left: auto;
	border: 2px solid #0078d7;
}
.gripper{
	position: absolute;
	right: 0;
	bottom: 0;
}
```
